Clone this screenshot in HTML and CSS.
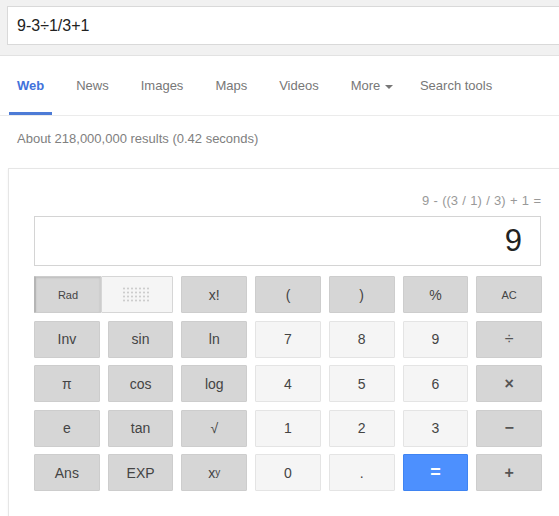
FILE: index.html
```html
<!DOCTYPE html>
<html>
<head>
<meta charset="utf-8">
<link rel="stylesheet" href="styles.css">
</head>
<body>
<div class="topbar">
  <div class="search">9-3÷1/3+1</div>
</div>
<div class="tabs">
  <span class="tab active">Web</span>
  <span class="tab">News</span>
  <span class="tab">Images</span>
  <span class="tab">Maps</span>
  <span class="tab">Videos</span>
  <span class="tab">More <span class="caret"></span></span>
  <span class="tab tools">Search tools</span>
</div>
<div class="results">About 218,000,000 results (0.42 seconds)</div>
<div class="card">
  <div class="expr">9 - ((3 / 1) / 3) + 1 =</div>
  <div class="display">9</div>
  <div class="keys">
    <div class="mode">
      <div class="key op rad small">Rad</div>
      <div class="key deg">
        <svg width="29" height="15" viewBox="0 0 29 15">
          <g fill="#c4c4c4">
            <circle cx="1" cy="1.5" r="0.9"/><circle cx="5" cy="1.5" r="0.9"/><circle cx="9" cy="1.5" r="0.9"/><circle cx="13" cy="1.5" r="0.9"/><circle cx="17" cy="1.5" r="0.9"/><circle cx="21" cy="1.5" r="0.9"/><circle cx="25" cy="1.5" r="0.9"/>
            <circle cx="1" cy="5.5" r="0.9"/><circle cx="5" cy="5.5" r="0.9"/><circle cx="9" cy="5.5" r="0.9"/><circle cx="13" cy="5.5" r="0.9"/><circle cx="17" cy="5.5" r="0.9"/><circle cx="21" cy="5.5" r="0.9"/><circle cx="25" cy="5.5" r="0.9"/>
            <circle cx="1" cy="9.5" r="0.9"/><circle cx="5" cy="9.5" r="0.9"/><circle cx="9" cy="9.5" r="0.9"/><circle cx="13" cy="9.5" r="0.9"/><circle cx="17" cy="9.5" r="0.9"/><circle cx="21" cy="9.5" r="0.9"/><circle cx="25" cy="9.5" r="0.9"/>
            <circle cx="1" cy="13.5" r="0.9"/><circle cx="5" cy="13.5" r="0.9"/><circle cx="9" cy="13.5" r="0.9"/><circle cx="13" cy="13.5" r="0.9"/><circle cx="17" cy="13.5" r="0.9"/><circle cx="21" cy="13.5" r="0.9"/><circle cx="25" cy="13.5" r="0.9"/>
          </g>
        </svg>
      </div>
    </div>
    <div class="key op">x!</div>
    <div class="key op">(</div>
    <div class="key op">)</div>
    <div class="key op">%</div>
    <div class="key op small">AC</div>

    <div class="key op">Inv</div>
    <div class="key op">sin</div>
    <div class="key op">ln</div>
    <div class="key num">7</div>
    <div class="key num">8</div>
    <div class="key num">9</div>
    <div class="key op sym light">÷</div>

    <div class="key op">π</div>
    <div class="key op">cos</div>
    <div class="key op">log</div>
    <div class="key num">4</div>
    <div class="key num">5</div>
    <div class="key num">6</div>
    <div class="key op sym">×</div>

    <div class="key op">e</div>
    <div class="key op">tan</div>
    <div class="key op">√</div>
    <div class="key num">1</div>
    <div class="key num">2</div>
    <div class="key num">3</div>
    <div class="key op sym">−</div>

    <div class="key op">Ans</div>
    <div class="key op">EXP</div>
    <div class="key op">x<sup>y</sup></div>
    <div class="key num">0</div>
    <div class="key num">.</div>
    <div class="key eq">=</div>
    <div class="key op sym">+</div>
  </div>
</div>
</body>
</html>
```
FILE: styles.css
```css
html, body {
  margin: 0;
  padding: 0;
  overflow: hidden;
  background: #fff;
  font-family: "Liberation Sans", Arial, sans-serif;
}
.topbar {
  height: 56px;
  box-sizing: border-box;
  background: #f1f1f1;
  border-bottom: 1px solid #e2e2e2;
  padding: 6px 0 0 7px;
}
.search {
  height: 39px;
  box-sizing: border-box;
  background: #fff;
  border: 1px solid #d9d9d9;
  border-right: none;
  padding-left: 9px;
  font-size: 16px;
  line-height: 37px;
  color: #222;
}
.tabs {
  height: 60px;
  box-sizing: border-box;
  border-bottom: 1px solid #ebebeb;
  padding-left: 9px;
  display: flex;
  align-items: stretch;
}
.tab {
  font-size: 13px;
  color: #777;
  padding: 22px 8px 0;
  margin-right: 16px;
  box-sizing: border-box;
  border-bottom: 3px solid transparent;
  white-space: nowrap;
}
.tab.active {
  color: #4272db;
  font-weight: bold;
  border-bottom-color: #4d7bd6;
}
.tab.tools {
  margin-left: -5px;
}
.caret {
  display: inline-block;
  width: 0;
  height: 0;
  border-left: 4px solid transparent;
  border-right: 4px solid transparent;
  border-top: 4px solid #777;
  vertical-align: middle;
  margin-left: 1px;
}
.results {
  font-size: 13px;
  color: #808080;
  padding: 15px 0 0 17px;
  line-height: 16px;
}
.card {
  margin: 21px 0 0 8px;
  width: 580px;
  height: 400px;
  box-sizing: border-box;
  border: 1px solid #e6e6e6;
  box-shadow: 0 1px 2px rgba(0,0,0,0.06);
  padding: 24px 0 0 25px;
}
.expr {
  width: 507px;
  text-align: right;
  font-size: 13px;
  word-spacing: 0.7px;
  color: #999;
  line-height: 16px;
}
.display {
  margin-top: 7px;
  width: 507px;
  height: 50px;
  box-sizing: border-box;
  border: 1px solid #d4d4d4;
  text-align: right;
  font-size: 31px;
  line-height: 48px;
  padding-right: 18px;
  color: #222;
}
.keys {
  margin-top: 10px;
  width: 508px;
  display: grid;
  grid-template-columns: repeat(7, 1fr);
  grid-auto-rows: 37px;
  column-gap: 8px;
  row-gap: 7.5px;
}
.key {
  box-sizing: border-box;
  border-radius: 1px;
  display: flex;
  align-items: center;
  justify-content: center;
  font-size: 14px;
  color: #444;
}
.op {
  background: #d6d6d6;
  border: 1px solid #cdcdcd;
}
.num {
  background: #f5f5f5;
  border: 1px solid #e4e4e4;
}
.small {
  font-size: 11px;
}
.sym {
  font-size: 16px;
  font-weight: bold;
  color: #555;
}
.sym.light {
  font-weight: normal;
  color: #555;
}
.eq {
  background: #4d90fe;
  border: 1px solid #3f84f2;
  color: #fff;
  font-size: 18px;
  font-weight: bold;
}
.mode {
  grid-column: span 2;
  display: flex;
}
.rad {
  width: 67px;
  border-left: 2px solid #b5b5b5;
  box-shadow: inset 0 1px 2px rgba(0,0,0,0.12);
}
.deg {
  flex: 1;
  background: #f5f5f5;
  border: 1px solid #d6d6d6;
}
sup {
  font-size: 10px;
  line-height: 0;
  vertical-align: 5px;
}
```
